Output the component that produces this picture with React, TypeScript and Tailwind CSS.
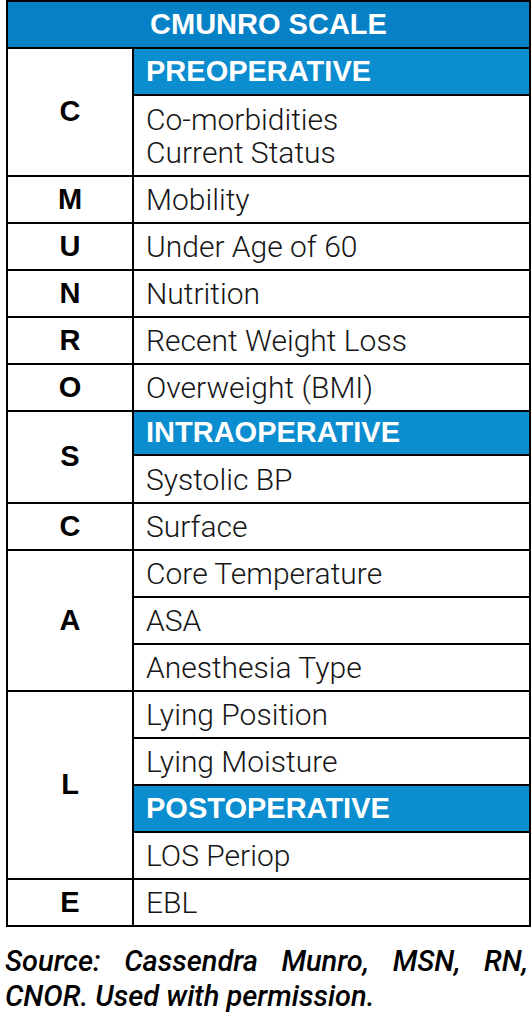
type Sub = { text: string; band?: boolean; h?: string };
type Group = { letter: string; rows: Sub[] };

const groups: Group[] = [
  {
    letter: "C",
    rows: [
      { text: "PREOPERATIVE", band: true },
      { text: "Co-morbidities\nCurrent Status", h: "h-[79px]" },
    ],
  },
  { letter: "M", rows: [{ text: "Mobility" }] },
  { letter: "U", rows: [{ text: "Under Age of 60" }] },
  { letter: "N", rows: [{ text: "Nutrition" }] },
  { letter: "R", rows: [{ text: "Recent Weight Loss" }] },
  { letter: "O", rows: [{ text: "Overweight (BMI)" }] },
  {
    letter: "S",
    rows: [
      { text: "INTRAOPERATIVE", band: true, h: "h-[44px]" },
      { text: "Systolic BP", h: "h-[46px]" },
    ],
  },
  { letter: "C", rows: [{ text: "Surface" }] },
  {
    letter: "A",
    rows: [
      { text: "Core Temperature" },
      { text: "ASA" },
      { text: "Anesthesia Type" },
    ],
  },
  {
    letter: "L",
    rows: [
      { text: "Lying Position" },
      { text: "Lying Moisture" },
      { text: "POSTOPERATIVE", band: true },
      { text: "LOS Periop" },
    ],
  },
  { letter: "E", rows: [{ text: "EBL" }] },
];

function Cell({ row, last }: { row: Sub; last: boolean }) {
  // border-box: cells with a bottom rule are 2px taller
  const height = row.h ?? (last ? "h-[45px]" : "h-[47px]");
  const border = last ? "" : "border-b-2 border-black";
  if (row.band) {
    return (
      <div
        className={`${height} ${border} bg-[#0b8dcf] flex items-center pl-3 text-white font-bold text-[29px] font-['Liberation_Sans',Arial,sans-serif]`}
      >
        {row.text}
      </div>
    );
  }
  return (
    <div
      className={`${height} ${border} flex flex-col justify-center pl-3 text-[#161616] text-[30px] leading-[33px] font-light font-['Roboto',sans-serif] whitespace-pre-line`}
    >
      {row.text}
    </div>
  );
}

export default function App() {
  return (
    <div className="w-[532px] h-[1024px] bg-white overflow-hidden font-['Liberation_Sans',Arial,sans-serif]">
      <div className="ml-[6px] w-[525px] border-2 border-black">
        {/* Title */}
        <div className="h-[47px] border-b-2 border-black bg-[#0781c5] flex items-center justify-center text-white font-bold text-[29px]">
          CMUNRO SCALE
        </div>

        {groups.map((g, gi) => (
          <div
            key={gi}
            className={`flex ${gi === groups.length - 1 ? "" : "border-b-2 border-black"}`}
          >
            <div className="w-[126px] shrink-0 border-r-2 border-black flex items-center justify-center font-bold text-[29px] text-black">
              {g.letter}
            </div>
            <div className="flex-1 flex flex-col">
              {g.rows.map((r, ri) => (
                <Cell key={ri} row={r} last={ri === g.rows.length - 1} />
              ))}
            </div>
          </div>
        ))}
      </div>

      {/* Source note */}
      <p className="ml-[5px] w-[523px] mt-[17px] text-[29px] leading-[35px] italic font-medium text-black text-justify font-['Roboto',sans-serif]">
        Source: Cassendra Munro, MSN, RN, CNOR. Used with permission.
      </p>
    </div>
  );
}
